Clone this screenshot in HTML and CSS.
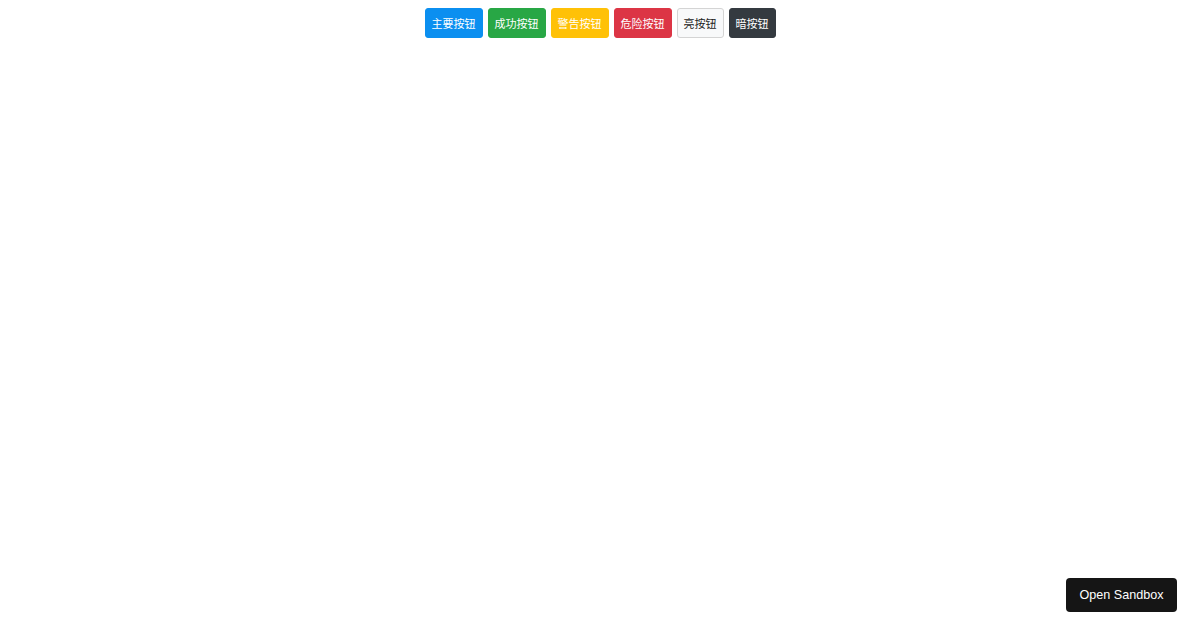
FILE: index.html
```html
<!DOCTYPE html>
<html lang="zh-CN">
<head>
<meta charset="utf-8">
<title>按钮</title>
<link rel="stylesheet" href="styles.css">
</head>
<body>
<div class="bar">
  <button class="btn btn-primary">主要按钮</button>
  <button class="btn btn-success">成功按钮</button>
  <button class="btn btn-warning">警告按钮</button>
  <button class="btn btn-danger">危险按钮</button>
  <button class="btn btn-light">亮按钮</button>
  <button class="btn btn-dark">暗按钮</button>
</div>
<a class="sandbox" href="#">Open Sandbox</a>
</body>
</html>
```
FILE: styles.css
```css
html, body {
  margin: 0;
  background: #fff;
}
body {
  padding: 8px 0 0;
  font-family: "Liberation Sans", "Noto Sans CJK SC", sans-serif;
}
.bar {
  display: flex;
  justify-content: center;
  gap: 5px;
}
.btn {
  box-sizing: border-box;
  height: 30px;
  padding: 4px 6px;
  border: 1px solid transparent;
  border-radius: 3px;
  font-family: "Noto Sans CJK SC", sans-serif;
  font-size: 11px;
  line-height: 20px;
  color: #fff;
  cursor: pointer;
}
.btn-primary { background: #0b8ff0; border-color: #0b8ff0; }
.btn-success { background: #28a745; border-color: #28a745; }
.btn-warning { background: #ffc107; border-color: #ffc107; }
.btn-danger { background: #dc3545; border-color: #dc3545; }
.btn-light { background: #f8f9fa; border-color: #d4d4d4; color: #222; }
.btn-dark { background: #343a40; border-color: #343a40; }
.sandbox {
  position: fixed;
  right: 23px;
  bottom: 18px;
  width: 111px;
  height: 34px;
  box-sizing: border-box;
  display: flex;
  align-items: center;
  justify-content: center;
  padding-bottom: 1px;
  background: #151515;
  color: #fff;
  border-radius: 4px;
  font-family: "Liberation Sans", sans-serif;
  font-size: 12.6px;
  text-decoration: none;
}
```
